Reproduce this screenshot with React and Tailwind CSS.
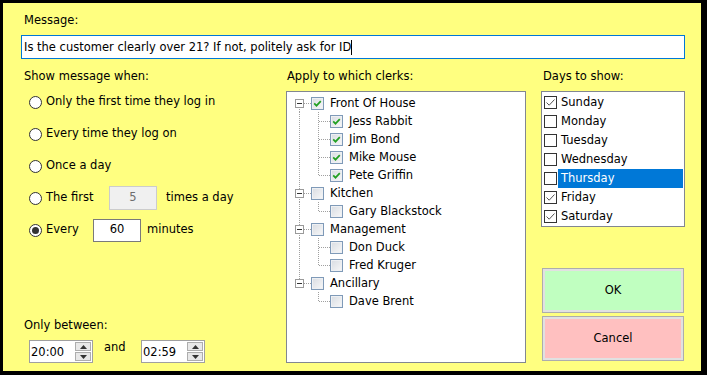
import React from "react";

function Radio({ checked }) {
  return (
    <span className="w-[13px] h-[13px] rounded-full border border-[#333333] bg-white flex items-center justify-center shrink-0">
      {checked && <span className="w-[7px] h-[7px] rounded-full bg-[#333333]" />}
    </span>
  );
}

function TreeCheck({ checked }) {
  return (
    <span className="w-[13px] h-[13px] border border-[#7f9ab8] bg-linear-to-br from-[#d8dce2] to-[#f8f8f8] shadow-[inset_0_0_0_1px_#eef0f3] flex items-center justify-center shrink-0">
      {checked && (
        <svg width="9" height="9" viewBox="0 0 9 9">
          <path d="M1.2 4.4 L3.5 6.7 L7.8 2.2" stroke="#22a022" strokeWidth="1.7" fill="none" />
        </svg>
      )}
    </span>
  );
}

function DayCheck({ checked }) {
  return (
    <span className="w-[13px] h-[13px] border border-[#333333] bg-white flex items-center justify-center shrink-0">
      {checked && (
        <svg width="11" height="11" viewBox="0 0 11 11">
          <path d="M1.5 5.5 L4.2 8.2 L9.5 2.5" stroke="#555555" strokeWidth="1" fill="none" />
        </svg>
      )}
    </span>
  );
}

const DOT = { stroke: "#a0a0a0", strokeWidth: 1, strokeDasharray: "1 1", shapeRendering: "crispEdges" };

function ParentGutter({ first, last }) {
  return (
    <svg width="24" height="18" viewBox="0 0 24 18" className="shrink-0">
      {!first && <line x1="12.5" y1="0" x2="12.5" y2="5" {...DOT} />}
      {!last && <line x1="12.5" y1="13" x2="12.5" y2="18" {...DOT} />}
      <line x1="17" y1="9.5" x2="24" y2="9.5" {...DOT} />
      <rect x="8.5" y="5.5" width="8" height="8" fill="#ffffff" stroke="#9a9a9a" shapeRendering="crispEdges" />
      <line x1="10" y1="9.5" x2="15" y2="9.5" stroke="#333333" shapeRendering="crispEdges" />
    </svg>
  );
}

function ChildGutter({ parentLast, lastChild }) {
  return (
    <svg width="43" height="18" viewBox="0 0 43 18" className="shrink-0">
      {!parentLast && <line x1="12.5" y1="0" x2="12.5" y2="18" {...DOT} />}
      <line x1="31.5" y1="0" x2="31.5" y2={lastChild ? 10 : 18} {...DOT} />
      <line x1="31.5" y1="9.5" x2="43" y2="9.5" {...DOT} />
    </svg>
  );
}

function TimeSpin({ value }) {
  return (
    <div className="w-[64px] h-[23px] border border-[#a0a0a0] bg-white flex items-center">
      <span className="pl-[1px] flex-1 leading-[14px]">{value}</span>
      <div className="flex flex-col mr-[1px] w-[16px] h-[19px] justify-between">
        <span className="h-[9px] border border-[#adadad] bg-[#e8e8e8] flex items-center justify-center">
          <svg width="7" height="4" viewBox="0 0 7 4"><path d="M0 4 L3.5 0 L7 4 Z" fill="#333333" /></svg>
        </span>
        <span className="h-[9px] border border-[#adadad] bg-[#e8e8e8] flex items-center justify-center">
          <svg width="7" height="4" viewBox="0 0 7 4"><path d="M0 0 L3.5 4 L7 0 Z" fill="#333333" /></svg>
        </span>
      </div>
    </div>
  );
}

const groups = [
  { name: "Front Of House", checked: true, children: ["Jess Rabbit", "Jim Bond", "Mike Mouse", "Pete Griffin"] },
  { name: "Kitchen", checked: false, children: ["Gary Blackstock"] },
  { name: "Management", checked: false, children: ["Don Duck", "Fred Kruger"] },
  { name: "Ancillary", checked: false, children: ["Dave Brent"] },
];

const days = [
  { d: "Sunday", c: true },
  { d: "Monday", c: false },
  { d: "Tuesday", c: false },
  { d: "Wednesday", c: false },
  { d: "Thursday", c: false, sel: true },
  { d: "Friday", c: true },
  { d: "Saturday", c: true },
];

export default function App() {
  return (
    <div className="w-[707px] h-[375px] bg-black pt-[3px] pl-[3px] font-['DejaVu_Sans',sans-serif] text-[11.5px] text-black">
      <div className="w-[698px] h-[368px] bg-[#ffff80] flex flex-col pt-[10px]">
        <div className="pl-[21px] h-[14px] leading-[14px]">Message:</div>
        <div className="mt-[8px] ml-[18px] w-[664px] h-[24px] border border-[#0078d7] bg-white flex items-center pl-[2px] leading-[14px]">
          <span>Is the customer clearly over 21? If not, politely ask for ID</span>
          <span className="w-px h-[15px] bg-black" />
        </div>

        <div className="flex mt-[10px]">
          {/* left column */}
          <div className="w-[283px] pl-[21px] flex flex-col">
            <div className="h-[14px] leading-[14px]">Show message when:</div>
            <div className="mt-[7px] flex flex-col gap-[8px] pl-[5px]">
              <div className="h-[24px] flex items-center gap-[4px]">
                <Radio />
                <span>Only the first time they log in</span>
              </div>
              <div className="h-[24px] flex items-center gap-[4px]">
                <Radio />
                <span>Every time they log on</span>
              </div>
              <div className="h-[24px] flex items-center gap-[4px]">
                <Radio />
                <span>Once a day</span>
              </div>
              <div className="h-[24px] flex items-center">
                <Radio />
                <span className="ml-[4px] w-[63px]">The first</span>
                <span className="w-[48px] h-[24px] border border-[#cccccc] bg-[#f0f0f0] text-[#6d6d6d] flex items-center justify-center">5</span>
                <span className="ml-[9px]">times a day</span>
              </div>
              <div className="h-[24px] flex items-center">
                <Radio checked />
                <span className="ml-[4px] w-[47px]">Every</span>
                <span className="w-[48px] h-[23px] border border-[#7a7a7a] bg-white flex items-center justify-center">60</span>
                <span className="ml-[6px]">minutes</span>
              </div>
            </div>
            <div className="mt-[76px] h-[14px] leading-[14px]">Only between:</div>
            <div className="mt-[8px] pl-[5px] flex items-start">
              <TimeSpin value="20:00" />
              <span className="ml-[11px] w-[37px] leading-[14px]">and</span>
              <TimeSpin value="02:59" />
            </div>
          </div>

          {/* middle column */}
          <div className="w-[255px] flex flex-col">
            <div className="pl-[1px] h-[14px] leading-[14px]">Apply to which clerks:</div>
            <div className="mt-[8px] w-[240px] h-[272px] border border-[#828790] bg-white pt-[2px]">
              {groups.map((g, gi) => (
                <React.Fragment key={g.name}>
                  <div className="h-[18px] flex items-center">
                    <ParentGutter first={gi === 0} last={gi === groups.length - 1} />
                    <TreeCheck checked={g.checked} />
                    <span className="ml-[6px] leading-[14px]">{g.name}</span>
                  </div>
                  {g.children.map((c, ci) => (
                    <div key={c} className="h-[18px] flex items-center">
                      <ChildGutter parentLast={gi === groups.length - 1} lastChild={ci === g.children.length - 1} />
                      <TreeCheck checked={g.checked} />
                      <span className="ml-[6px] leading-[14px]">{c}</span>
                    </div>
                  ))}
                </React.Fragment>
              ))}
            </div>
          </div>

          {/* right column */}
          <div className="w-[144px] flex flex-col">
            <div className="pl-[2px] h-[14px] leading-[14px]">Days to show:</div>
            <div className="mt-[8px] w-[144px] h-[136px] border border-[#828790] bg-white pl-[2px] pt-[1px]">
              {days.map((x) => (
                <div key={x.d} className="h-[19px] flex items-center">
                  <DayCheck checked={x.c} />
                  <span
                    className={
                      x.sel
                        ? "ml-[1px] pl-[3px] w-[125px] h-[19px] flex items-center bg-[#0078d7] text-white"
                        : "ml-[1px] pl-[3px] h-[19px] flex items-center"
                    }
                  >
                    {x.d}
                  </span>
                </div>
              ))}
            </div>
            <div className="mt-[41px] ml-[1px] flex flex-col gap-[3px]">
              <div className="w-[142px] h-[45px] border border-[#adadad] bg-[#c0ffc0] shadow-[inset_0_0_0_2px_#e1e1e1] flex items-center justify-center">
                OK
              </div>
              <div className="w-[142px] h-[45px] border border-[#adadad] bg-[#ffc0c0] shadow-[inset_0_0_0_2px_#e1e1e1] flex items-center justify-center">
                Cancel
              </div>
            </div>
          </div>
        </div>
      </div>
    </div>
  );
}
